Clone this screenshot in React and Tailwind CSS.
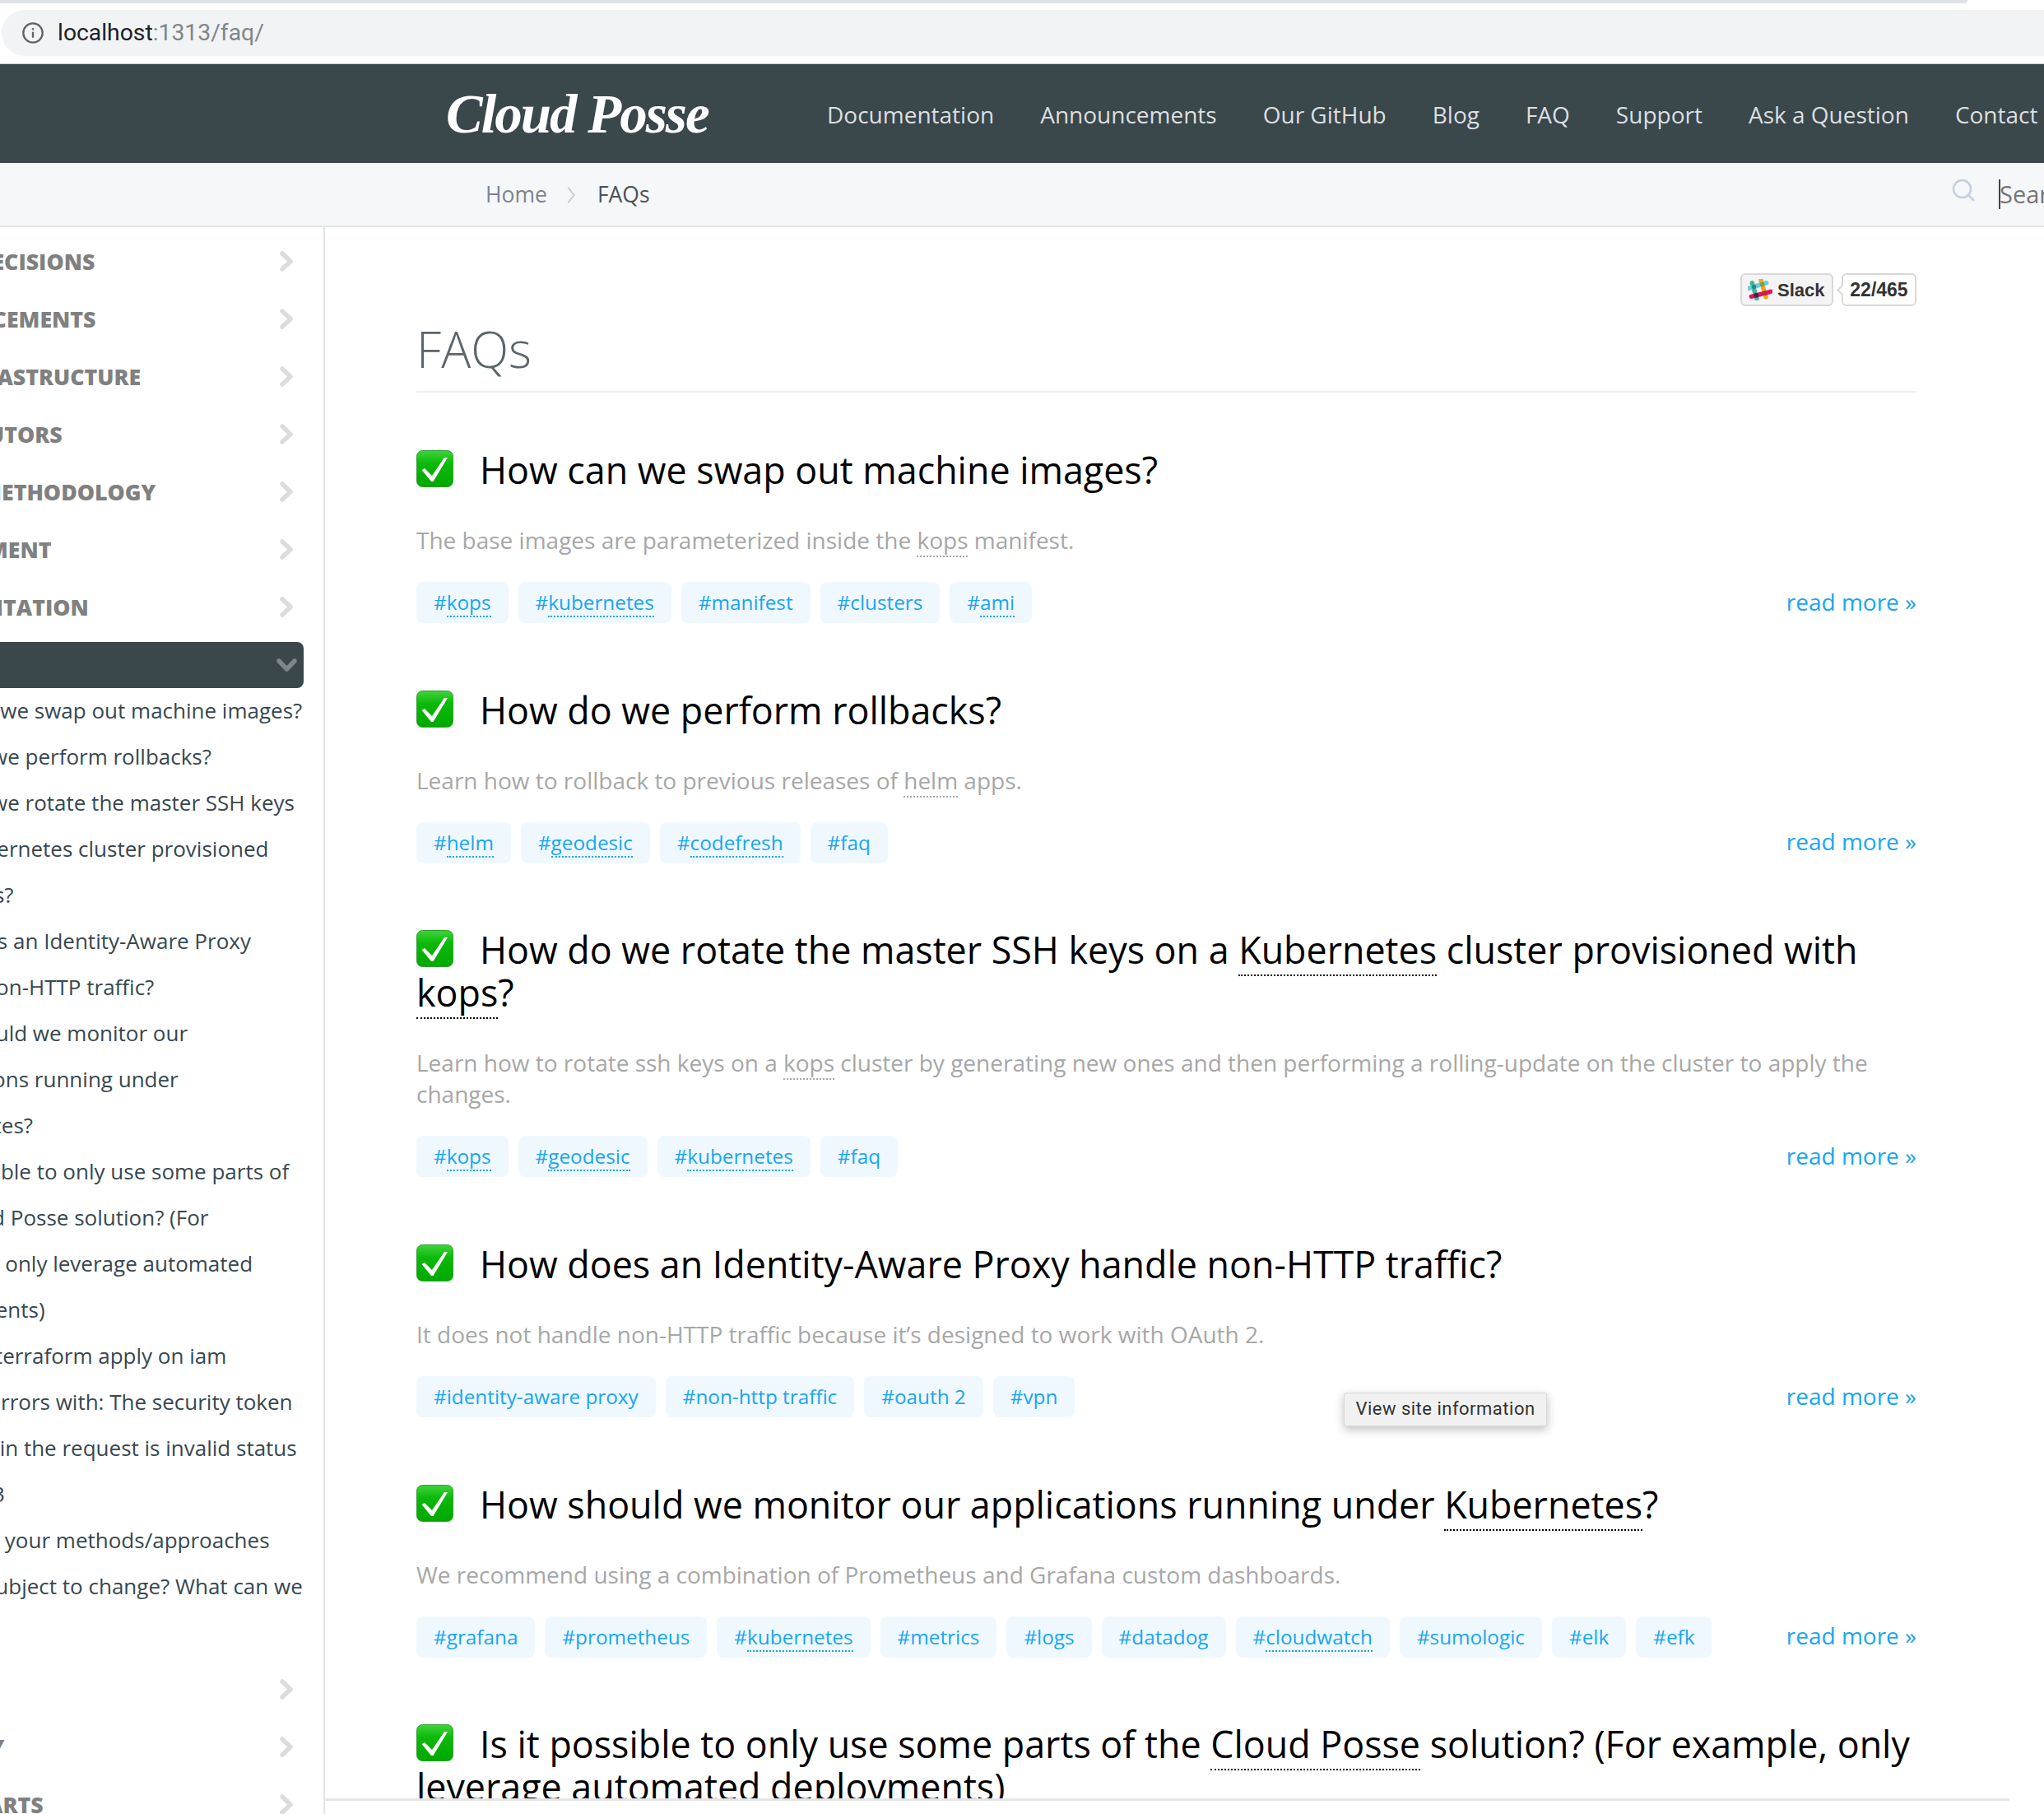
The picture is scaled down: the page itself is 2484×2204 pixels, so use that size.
const sans = { fontFamily: '"Open Sans", sans-serif' };

function Check() {
  return (
    <svg viewBox="0 0 45 45" className="inline-block w-[45px] h-[45px] mr-[32px] align-[-4px]">
      <defs>
        <linearGradient id="chk" x1="0" y1="0" x2="0" y2="1">
          <stop offset="0" stopColor="#3fd43c" />
          <stop offset="0.35" stopColor="#0cb90a" />
          <stop offset="1" stopColor="#00a800" />
        </linearGradient>
      </defs>
      <rect x="0.5" y="0.5" width="44" height="44" rx="7" fill="url(#chk)" stroke="#2f9f2f" />
      <path d="M6.6 24 L10 22 L19 31 L34 9 L38 9 L20.5 38 L18 38 Z" fill="#fff" />
    </svg>
  );
}

function Dot({ children, tone }) {
  return <span className={`border-b-2 border-dotted ${tone}`}>{children}</span>;
}

function Tag({ name, dotted }) {
  return (
    <span className="h-[50px] px-[21px] rounded-lg bg-[#f0f8ff] text-[#16a6f3] text-[24.3px] leading-[50px] whitespace-nowrap">
      #{dotted ? <Dot tone="border-[#16a6f3]">{name}</Dot> : name}
    </span>
  );
}

function Item({ title, desc, tags }) {
  return (
    <article className="mb-[79.7px]">
      <h2 className="text-[44.8px] leading-[52px] text-black mb-[40px]">
        <Check />
        {title}
      </h2>
      <p className="text-[28px] leading-[38px] text-[#a7a7a7] mb-[32px]">{desc}</p>
      <div className="flex items-center justify-between">
        <div className="flex gap-[12px]">
          {tags.map((t) => (
            <Tag key={t[0]} name={t[0]} dotted={t[1]} />
          ))}
        </div>
        <a className="text-[28px] text-[#16a6f3] whitespace-nowrap -mt-[3px]">read more »</a>
      </div>
    </article>
  );
}

const kh = "border-black";
const kd = "border-[#a7a7a7]";

const items = [
  {
    title: "How can we swap out machine images?",
    desc: <>The base images are parameterized inside the <Dot tone={kd}>kops</Dot> manifest.</>,
    tags: [["kops", 1], ["kubernetes", 1], ["manifest"], ["clusters"], ["ami", 1]],
  },
  {
    title: "How do we perform rollbacks?",
    desc: <>Learn how to rollback to previous releases of <Dot tone={kd}>helm</Dot> apps.</>,
    tags: [["helm", 1], ["geodesic", 1], ["codefresh", 1], ["faq"]],
  },
  {
    title: <>How do we rotate the master SSH keys on a <Dot tone={kh}>Kubernetes</Dot> cluster provisioned with <Dot tone={kh}>kops</Dot>?</>,
    desc: <>Learn how to rotate ssh keys on a <Dot tone={kd}>kops</Dot> cluster by generating new ones and then performing a rolling-update on the cluster to apply the changes.</>,
    tags: [["kops", 1], ["geodesic", 1], ["kubernetes", 1], ["faq"]],
  },
  {
    title: "How does an Identity-Aware Proxy handle non-HTTP traffic?",
    desc: "It does not handle non-HTTP traffic because it’s designed to work with OAuth 2.",
    tags: [["identity-aware proxy"], ["non-http traffic"], ["oauth 2"], ["vpn"]],
  },
  {
    title: <>How should we monitor our applications running under <Dot tone={kh}>Kubernetes</Dot>?</>,
    desc: "We recommend using a combination of Prometheus and Grafana custom dashboards.",
    tags: [["grafana"], ["prometheus"], ["kubernetes", 1], ["metrics"], ["logs"], ["datadog"], ["cloudwatch", 1], ["sumologic"], ["elk"], ["efk"]],
  },
  {
    title: <>Is it possible to only use some parts of the <Dot tone={kh}>Cloud Posse</Dot> solution? (For example, only leverage automated deployments)</>,
    desc: "",
    tags: [],
  },
];

const navLinks = ["Documentation", "Announcements", "Our GitHub", "Blog", "FAQ", "Support", "Ask a Question", "Contact"];

const topSections = ["DESIGN DECISIONS", "ANNOUNCEMENTS", "AWS INFRASTRUCTURE", "CONTRIBUTORS", "DEVOPS METHODOLOGY", "DEVELOPMENT", "DOCUMENTATION"];
const subLines = [
  "How can we swap out machine images?",
  "How do we perform rollbacks?",
  "How do we rotate the master SSH keys",
  "on a Kubernetes cluster provisioned",
  "with kops?",
  "How does an Identity-Aware Proxy",
  "handle non-HTTP traffic?",
  "How should we monitor our",
  "applications running under",
  "Kubernetes?",
  "Is it possible to only use some parts of",
  "the Cloud Posse solution? (For",
  "example, only leverage automated",
  "deployments)",
  "Why did terraform apply on iam",
  "policies errors with: The security token",
  "included in the request is invalid status",
  "code: 403",
  "What are your methods/approaches",
  "that be subject to change? What can we",
  "do?",
];
const bottomSections = ["TOOLS", "GLOSSARY", "HELM CHARTS"];

function SectionRow({ label }) {
  return (
    <div className="h-[70px] flex items-center justify-between pr-[37px]">
      <span className="-ml-[137px] whitespace-nowrap font-extrabold text-[26.7px] text-[#808080]">{label}</span>
      <svg viewBox="0 0 16 25" className="w-[16px] h-[25px] shrink-0 -mt-[2px]">
        <path d="M3 3 L13 12.5 L3 22" fill="none" stroke="#dcdcdc" strokeWidth="5.5" strokeLinecap="round" strokeLinejoin="round" />
      </svg>
    </div>
  );
}

function SlackMark() {
  return (
    <svg viewBox="0 0 30 26" className="w-[30px] h-[26px] shrink-0">
      <g strokeWidth="5.5" strokeLinecap="round" fill="none">
        <path d="M5.3 4.7 L11 23.7" stroke="#3eb991" />
        <path d="M16 1.3 L22 22" stroke="#e9a820" />
        <path d="M1 11.3 L22.7 4.7" stroke="#70cadb" />
        <path d="M4.3 21.3 L27.7 15.3" stroke="#e01563" />
      </g>
      <circle cx="7.4" cy="9.5" r="2.8" fill="#1f8f80" />
      <circle cx="17.6" cy="6.5" r="2.8" fill="#8a9a30" />
      <circle cx="10.3" cy="19.8" r="2.8" fill="#4d1b4e" />
      <circle cx="20.3" cy="17.2" r="2.8" fill="#c9252f" />
    </svg>
  );
}

export default function App() {
  return (
    <div className="w-[2484px] h-[2204px] overflow-hidden bg-white relative" style={sans}>
      {/* browser chrome */}
      <div className="h-[77px] bg-white border-b border-[#c8c8c8] box-content">
        <div className="h-[4px] w-[2391px] bg-[#dee1e6] rounded-br-lg" />
        <div className="mt-[8px] ml-[2px] h-[56px] bg-[#f1f3f4] rounded-l-[28px] flex items-center pl-[24px]">
          <svg viewBox="0 0 24 24" className="w-[28px] h-[28px]" fill="none" stroke="#5f6368" strokeWidth="2">
            <circle cx="12" cy="12" r="10" />
            <path d="M12 11 V17 M12 7 V9" />
          </svg>
          <span className="ml-[16px] text-[28.3px] text-[#202124]" style={{ fontFamily: 'Roboto, sans-serif' }}>
            localhost<span className="text-[#80868b]">:1313/faq/</span>
          </span>
        </div>
      </div>

      {/* site header */}
      <header className="h-[120px] bg-[#3a474b] flex items-center pl-[542px]">
        <span
          className="w-[463px] shrink-0 text-white italic font-bold text-[67px] tracking-[-2px] whitespace-nowrap"
          style={{ fontFamily: '"Liberation Serif", serif' }}
        >
          Cloud Posse
        </span>
        <nav className="flex shrink-0 gap-[56px] pt-[2px] text-[28px] text-[#dcdfe0] whitespace-nowrap">
          {navLinks.map((n) => (
            <a key={n}>{n}</a>
          ))}
        </nav>
      </header>

      {/* breadcrumb */}
      <div className="h-[78px] bg-[#f5f7f9] border-b-2 border-[#e4e6e7] flex items-center justify-between pl-[590px]">
        <div className="flex items-center pt-[2px] text-[26.5px]">
          <span className="text-[#7f828f]">Home</span>
          <svg viewBox="0 0 12 24" className="w-[12px] h-[22px] ml-[23px] mr-[26px]">
            <path d="M2 2 L10 12 L2 22" fill="none" stroke="#c8cacc" strokeWidth="2" />
          </svg>
          <span className="text-[#4a5256]">FAQs</span>
        </div>
        <div className="w-[112px] h-full flex items-center overflow-hidden">
          <svg viewBox="0 0 28 29" className="w-[28px] h-[29px] shrink-0 -mt-[10px]" fill="none" stroke="#c5cfe0" strokeWidth="2.5">
            <circle cx="12.5" cy="12.5" r="10.5" />
            <path d="M20 20 L27 27" />
          </svg>
          <span className="ml-[29px] w-[2px] h-[36px] bg-[#3a474b] shrink-0" />
          <span className="text-[29px] text-[#757575] whitespace-nowrap -ml-[1px]">Search</span>
        </div>
      </div>

      <div className="flex items-start">
        {/* sidebar */}
        <aside className="w-[395px] h-[1928px] border-r-2 border-[#e5e5e5] overflow-hidden pt-[7px] shrink-0 box-border">
          {topSections.map((s) => (
            <SectionRow key={s} label={s} />
          ))}
          <div className="mt-[7px] w-[369px] h-[56px] bg-[#3a474b] rounded-r-lg flex items-center justify-end pr-[8px]">
            <svg viewBox="0 0 25 16" className="w-[25px] h-[16px]">
              <path d="M3 3 L12.5 13 L22 3" fill="none" stroke="#7d8688" strokeWidth="5.5" strokeLinecap="round" strokeLinejoin="round" />
            </svg>
          </div>
          <ul className="mb-[6px]">
            {subLines.map((l) => (
              <li key={l} className="h-[56px] leading-[54px] -ml-[111px] whitespace-nowrap text-[26px] text-[#37474f]">
                {l}
              </li>
            ))}
          </ul>
          {bottomSections.map((s) => (
            <SectionRow key={s} label={s} />
          ))}
        </aside>

        {/* main */}
        <main className="w-[2047px] h-[1912px] shrink-0 border-b-[3px] border-[#e5e5e5] overflow-hidden pl-[111px] pr-[113px] pt-[56px] box-border">
          <div className="flex justify-end h-[40px]">
            <div className="flex gap-[10px] text-[22px] font-bold text-[#333]" style={{ fontFamily: '"Liberation Sans", sans-serif' }}>
              <span className="w-[113px] h-[40px] rounded-[6px] border-2 border-[#d8d8d8] bg-[#f4f4f4] flex items-center pl-[7px] gap-[6px]">
                <SlackMark />
                Slack
              </span>
              <span className="relative w-[91px] h-[40px] rounded-[6px] border-2 border-[#d8d8d8] bg-white flex items-center justify-center text-[23px]">
                <span className="absolute -left-[6px] top-[14px] w-[9px] h-[9px] rotate-45 bg-white border-l-2 border-b-2 border-[#d8d8d8]" />
                22/465
              </span>
            </div>
          </div>
          <h1 className="h-[105px] border-b-2 border-[#eeeeee] text-[60px] font-light leading-[104px] text-[#5b666a] mb-[68px]">FAQs</h1>
          {items.map((it, i) => (
            <Item key={i} {...it} />
          ))}
        </main>
      </div>

      {/* tooltip */}
      <div
        className="absolute left-[1633px] top-[1692px] w-[247px] h-[41px] pb-[2px] bg-[#f1f1f1] border border-[#d8d8d8] rounded-[2px] shadow-[0_4px_12px_rgba(0,0,0,0.25)] flex items-center justify-center text-[22px] tracking-[0.5px] text-[#333]"
        style={{ fontFamily: 'Roboto, sans-serif' }}
      >
        View site information
      </div>
    </div>
  );
}
